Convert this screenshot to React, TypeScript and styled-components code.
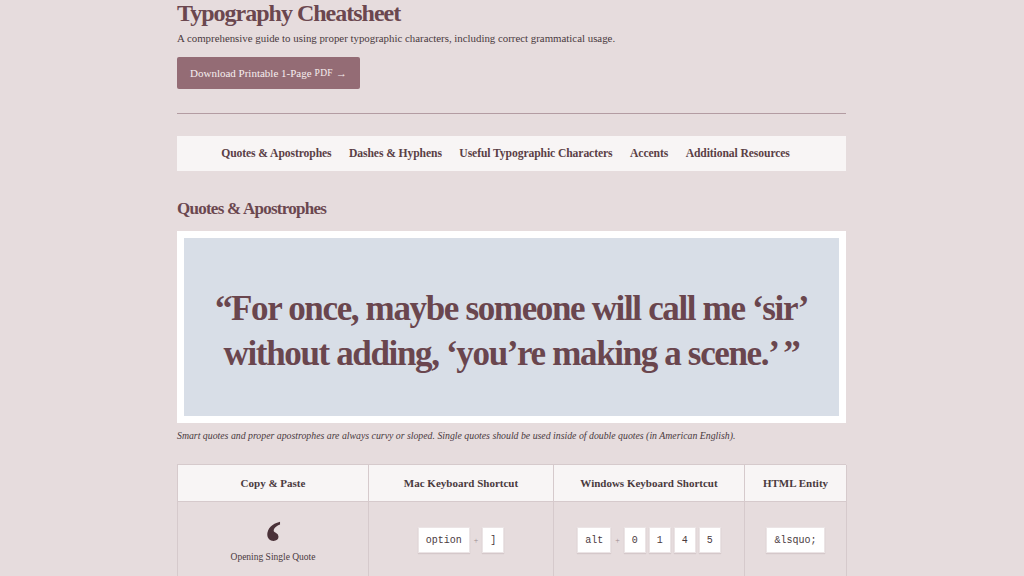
import React from "react";
import styled, { createGlobalStyle } from "styled-components";

const GlobalStyle = createGlobalStyle`
  html, body { margin: 0; padding: 0; }
  body {
    background: #e6dcdd;
    font-family: "Liberation Serif", "DejaVu Serif", serif;
    color: #5b3f46;
  }
`;

const Page = styled.div`
  width: 669px;
  margin-left: calc(50% - 335px);
`;

const Title = styled.h1`
  margin: 0;
  font-family: "Liberation Serif", serif;
  font-weight: 700;
  font-size: 24px;
  line-height: 27px;
  letter-spacing: -1px;
  color: #6b474f;
`;

const Subtitle = styled.p`
  margin: 4px 0 0;
  font-size: 10.85px;
  line-height: 14px;
  color: #4a3a3e;
`;

const Button = styled.a`
  display: inline-flex;
  align-items: center;
  gap: 3px;
  margin-top: 12px;
  height: 32px;
  padding: 0 13px;
  background: #946c75;
  border-radius: 2px;
  color: #f6eeef;
  font-size: 11px;
  text-decoration: none;
`;

const Small = styled.span`
  font-size: 9.5px;
  letter-spacing: 0.3px;
`;

const Rule = styled.hr`
  margin: 24px 0 0;
  border: 0;
  border-top: 1px solid #b39ca2;
`;

const Nav = styled.nav`
  margin-top: 22px;
  height: 35px;
  background: #f8f5f5;
  display: flex;
  align-items: center;
  justify-content: center;
  gap: 17.5px;
  padding-right: 12px;
`;

const NavItem = styled.a`
  font-weight: 700;
  font-size: 11.65px;
  letter-spacing: -0.1px;
  color: #5b3f46;
  text-decoration: none;
`;

const SectionTitle = styled.h2`
  margin: 28px 0 0;
  font-weight: 700;
  font-size: 17px;
  line-height: 20px;
  letter-spacing: -0.75px;
  color: #6b474f;
`;

const QuoteFrame = styled.div`
  margin-top: 12px;
  padding: 7px;
  background: #ffffff;
`;

const QuoteInner = styled.div`
  height: 178px;
  background: #d8dee7;
  display: flex;
  align-items: center;
  justify-content: center;
  text-align: center;
`;

const QuoteText = styled.p`
  margin: 0;
  padding-top: 8px;
  font-weight: 700;
  font-size: 35px;
  line-height: 45px;
  letter-spacing: -1.35px;
  color: #6a464e;
`;

const Caption = styled.p`
  margin: 7px 0 0;
  font-style: italic;
  font-size: 9.8px;
  line-height: 12px;
  color: #4a3a3e;
`;

const Table = styled.div`
  margin-top: 22px;
  display: grid;
  grid-template-columns: 191px 185px 191px 102px;
  border-left: 1px solid #d6cacc;
  border-top: 1px solid #d6cacc;
`;

const Head = styled.div`
  height: 36px;
  display: flex;
  align-items: center;
  justify-content: center;
  background: #f8f5f5;
  border-right: 1px solid #d6cacc;
  border-bottom: 1px solid #d6cacc;
  font-weight: 700;
  font-size: 11px;
  color: #4a3a3e;
`;

const Cell = styled.div<{ $top: number }>`
  height: 80px;
  display: flex;
  flex-direction: column;
  align-items: center;
  justify-content: flex-start;
  box-sizing: border-box;
  padding-top: ${(p) => p.$top}px;
  border-right: 1px solid #d6cacc;
`;

const Glyph = styled.div`
  font-family: "Liberation Serif", serif;
  font-weight: 700;
  font-size: 64px;
  line-height: 44px;
  height: 23px;
  color: #4a3138;
`;

const GlyphLabel = styled.div`
  margin-top: 7px;
  font-size: 9.5px;
  line-height: 12px;
  color: #4a3a3e;
`;

const Keys = styled.div`
  display: flex;
  align-items: center;
  gap: 3px;
`;

const Key = styled.span`
  display: inline-flex;
  align-items: center;
  justify-content: center;
  height: 26px;
  min-width: 21px;
  padding: 0 7px;
  box-sizing: border-box;
  background: #ffffff;
  border: 1px solid #ebe4e5;
  box-shadow: 0 1px 1px rgba(90, 60, 66, 0.12);
  font-family: "Liberation Mono", "DejaVu Sans Mono", monospace;
  font-size: 10px;
  color: #4a3a3e;
`;

const Plus = styled.span`
  font-size: 8px;
  color: #9a8a8e;
  padding: 0 1px;
`;

export default function App() {
  return (
    <>
      <GlobalStyle />
      <Page>
        <Title>Typography Cheatsheet</Title>
        <Subtitle>
          A comprehensive guide to using proper typographic characters, including correct grammatical usage.
        </Subtitle>
        <Button href="#">
          Download Printable 1-Page <Small>PDF</Small> →
        </Button>
        <Rule />
        <Nav>
          <NavItem href="#">Quotes &amp; Apostrophes</NavItem>
          <NavItem href="#">Dashes &amp; Hyphens</NavItem>
          <NavItem href="#">Useful Typographic Characters</NavItem>
          <NavItem href="#">Accents</NavItem>
          <NavItem href="#">Additional Resources</NavItem>
        </Nav>
        <SectionTitle>Quotes &amp; Apostrophes</SectionTitle>
        <QuoteFrame>
          <QuoteInner>
            <QuoteText>
              “For once, maybe someone will call me ‘sir’
              <br />
              without adding, ‘you’re making a scene.’ ”
            </QuoteText>
          </QuoteInner>
        </QuoteFrame>
        <Caption>
          Smart quotes and proper apostrophes are always curvy or sloped. Single quotes should be used inside of double quotes (in American English).
        </Caption>
        <Table>
          <Head>Copy &amp; Paste</Head>
          <Head>Mac Keyboard Shortcut</Head>
          <Head>Windows Keyboard Shortcut</Head>
          <Head>HTML Entity</Head>
          <Cell $top={19}>
            <Glyph>‘</Glyph>
            <GlyphLabel>Opening Single Quote</GlyphLabel>
          </Cell>
          <Cell $top={25}>
            <Keys>
              <Key>option</Key>
              <Plus>+</Plus>
              <Key>]</Key>
            </Keys>
          </Cell>
          <Cell $top={25}>
            <Keys>
              <Key>alt</Key>
              <Plus>+</Plus>
              <Key>0</Key>
              <Key>1</Key>
              <Key>4</Key>
              <Key>5</Key>
            </Keys>
          </Cell>
          <Cell $top={25}>
            <Keys>
              <Key>&amp;lsquo;</Key>
            </Keys>
          </Cell>
        </Table>
      </Page>
    </>
  );
}
